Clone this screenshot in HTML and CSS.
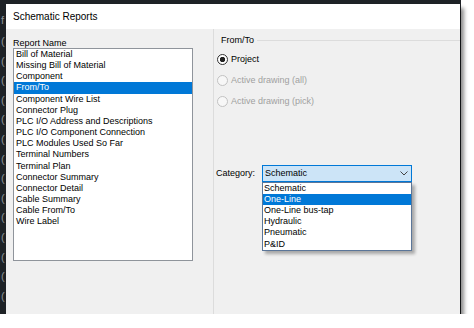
FILE: index.html
```html
<!DOCTYPE html>
<html lang="en">
<head>
  <meta charset="UTF-8">
  <title>Schematic Reports</title>
  <link rel="stylesheet" href="styles.css">
</head>
<body>
  <div class="screen">
    <div class="strip">
      <span class="glyph glyph-f">f</span>
      <span class="glyph">(</span>
      <span class="glyph">(</span>
      <span class="glyph">(</span>
      <span class="glyph">(</span>
      <span class="glyph">(</span>
      <span class="glyph">(</span>
      <span class="glyph">(</span>
      <span class="glyph">(</span>
      <span class="glyph">(</span>
      <span class="glyph">(</span>
      <span class="glyph">(</span>
      <span class="glyph">(</span>
      <span class="glyph">(</span>
      <span class="glyph">(</span>
    </div>
    <div class="stage">
      <div class="dialog">
        <div class="titlebar">Schematic Reports</div>
        <div class="dlg-body">
          <div class="left-pane">
            <div class="field-label">Report Name</div>
            <ul class="listbox">
              <li>Bill of Material</li>
              <li>Missing Bill of Material</li>
              <li>Component</li>
              <li class="selected">From/To</li>
              <li>Component Wire List</li>
              <li>Connector Plug</li>
              <li>PLC I/O Address and Descriptions</li>
              <li>PLC I/O Component Connection</li>
              <li>PLC Modules Used So Far</li>
              <li>Terminal Numbers</li>
              <li>Terminal Plan</li>
              <li>Connector Summary</li>
              <li>Connector Detail</li>
              <li>Cable Summary</li>
              <li>Cable From/To</li>
              <li>Wire Label</li>
            </ul>
          </div>
          <div class="right-pane">
            <div class="group">
              <div class="group-head">
                <span>From/To</span>
                <span class="group-rule"></span>
              </div>
              <div class="radio first">
                <span class="radio-dot checked"></span>
                <span>Project</span>
              </div>
              <div class="radio disabled">
                <span class="radio-dot"></span>
                <span>Active drawing (all)</span>
              </div>
              <div class="radio disabled">
                <span class="radio-dot"></span>
                <span>Active drawing (pick)</span>
              </div>
            </div>
            <div class="category-row">
              <span class="category-label">Category:</span>
              <div class="combo-wrap">
                <div class="combo">
                  <span>Schematic</span>
                  <svg class="chevron" width="8" height="5" viewBox="0 0 8 5">
                    <path d="M0.5 0.5 L4 4 L7.5 0.5" fill="none" stroke="#444" stroke-width="1"/>
                  </svg>
                </div>
                <ul class="dropdown">
                  <li>Schematic</li>
                  <li class="selected">One-Line</li>
                  <li>One-Line bus-tap</li>
                  <li>Hydraulic</li>
                  <li>Pneumatic</li>
                  <li>P&amp;ID</li>
                </ul>
              </div>
            </div>
          </div>
        </div>
      </div>
    </div>
  </div>
</body>
</html>
```

FILE: styles.css
```css
* {
  --screen-color: #1e2226;
  --dialog-color: #f0f0f0;
  --select-color: #0078d7;
  --disabled-text: #a0a0a0;
}
body {
    margin: 0;
    background-color: #fff;
    font-family: "Liberation Sans", Arial, sans-serif;
    font-size: 9px;
    color: #000;
}

.screen {
    display: flex;
    width: 461px;
    height: 314px;
    background-color: var(--screen-color);
}

.strip {
    flex: none;
    width: 6px;
    overflow: hidden;
    display: flex;
    flex-direction: column;
    padding-top: 13px;
    box-sizing: border-box;
    color: #8d9298;
    font-size: 11px;
    line-height: 19.6px;
}
.glyph {
    margin-left: 1px;
}
.glyph-f {
    line-height: 14px;
    margin-bottom: 5px;
}

.stage {
    flex: 1;
    min-width: 0;
    padding-top: 4px;
}

.dialog {
    display: flex;
    flex-direction: column;
    width: 454px;
    height: 311px;
    background-color: var(--dialog-color);
    box-shadow: 4px 4px 4px rgba(0, 0, 0, 0.45);
}
.titlebar {
    height: 25px;
    padding-left: 7px;
    background-color: #fff;
    font-size: 10px;
    line-height: 25px;
}

.dlg-body {
    flex: 1;
    display: flex;
}

.left-pane {
    width: 208px;
    padding-left: 7px;
    box-sizing: border-box;
    border-right: 1px solid #dcdcdc;
}
.field-label {
    padding-top: 9px;
    line-height: 10px;
}
.listbox {
    width: 180px;
    height: 213px;
    margin: 0;
    padding: 0;
    box-sizing: border-box;
    border: 1px solid #8f949b;
    background-color: #fff;
    list-style: none;
}
.listbox li {
    padding-left: 2px;
    line-height: 11.15px;
    white-space: nowrap;
}
.selected {
    background-color: var(--select-color);
    color: #fff;
}

.right-pane {
    flex: 1;
    padding: 5.5px 0 0 2px;
}
.group-head {
    display: flex;
    align-items: center;
    gap: 3px;
    padding-left: 5px;
    line-height: 11px;
}
.group-rule {
    flex: 1;
    border-top: 1px solid #dcdcdc;
}

.radio {
    display: flex;
    align-items: center;
    gap: 3px;
    height: 21px;
    margin-left: 1px;
}
.radio.first {
    margin-top: 3px;
}
.radio-dot {
    width: 11px;
    height: 11px;
    box-sizing: border-box;
    border: 1px solid #c2c2c2;
    border-radius: 50%;
    background-color: #f7f7f7;
}
.radio-dot.checked {
    border-color: #333;
    background: radial-gradient(circle, #222 0 2.4px, #fff 3px);
}
.radio.disabled {
    color: var(--disabled-text);
}

.category-row {
    display: flex;
    align-items: center;
    height: 17px;
    margin-top: 53px;
}
.category-label {
    width: 46px;
}
.combo-wrap {
    position: relative;
    width: 150px;
    height: 17px;
}
.combo {
    display: flex;
    align-items: center;
    justify-content: space-between;
    height: 17px;
    padding: 0 3px 0 2px;
    box-sizing: border-box;
    border: 1px solid var(--select-color);
    background-color: #cce4f7;
}
.chevron {
    display: block;
}

/* open list hangs over the panel */
.dropdown {
    position: absolute;
    top: 17px;
    left: 0;
    width: 150px;
    margin: 0;
    padding: 0;
    box-sizing: border-box;
    border: 1px solid #5b7699;
    background-color: #fff;
    list-style: none;
    box-shadow: 3px 3px 3px rgba(0, 0, 0, 0.3);
}
.dropdown li {
    padding-left: 1px;
    line-height: 11.2px;
}
```
